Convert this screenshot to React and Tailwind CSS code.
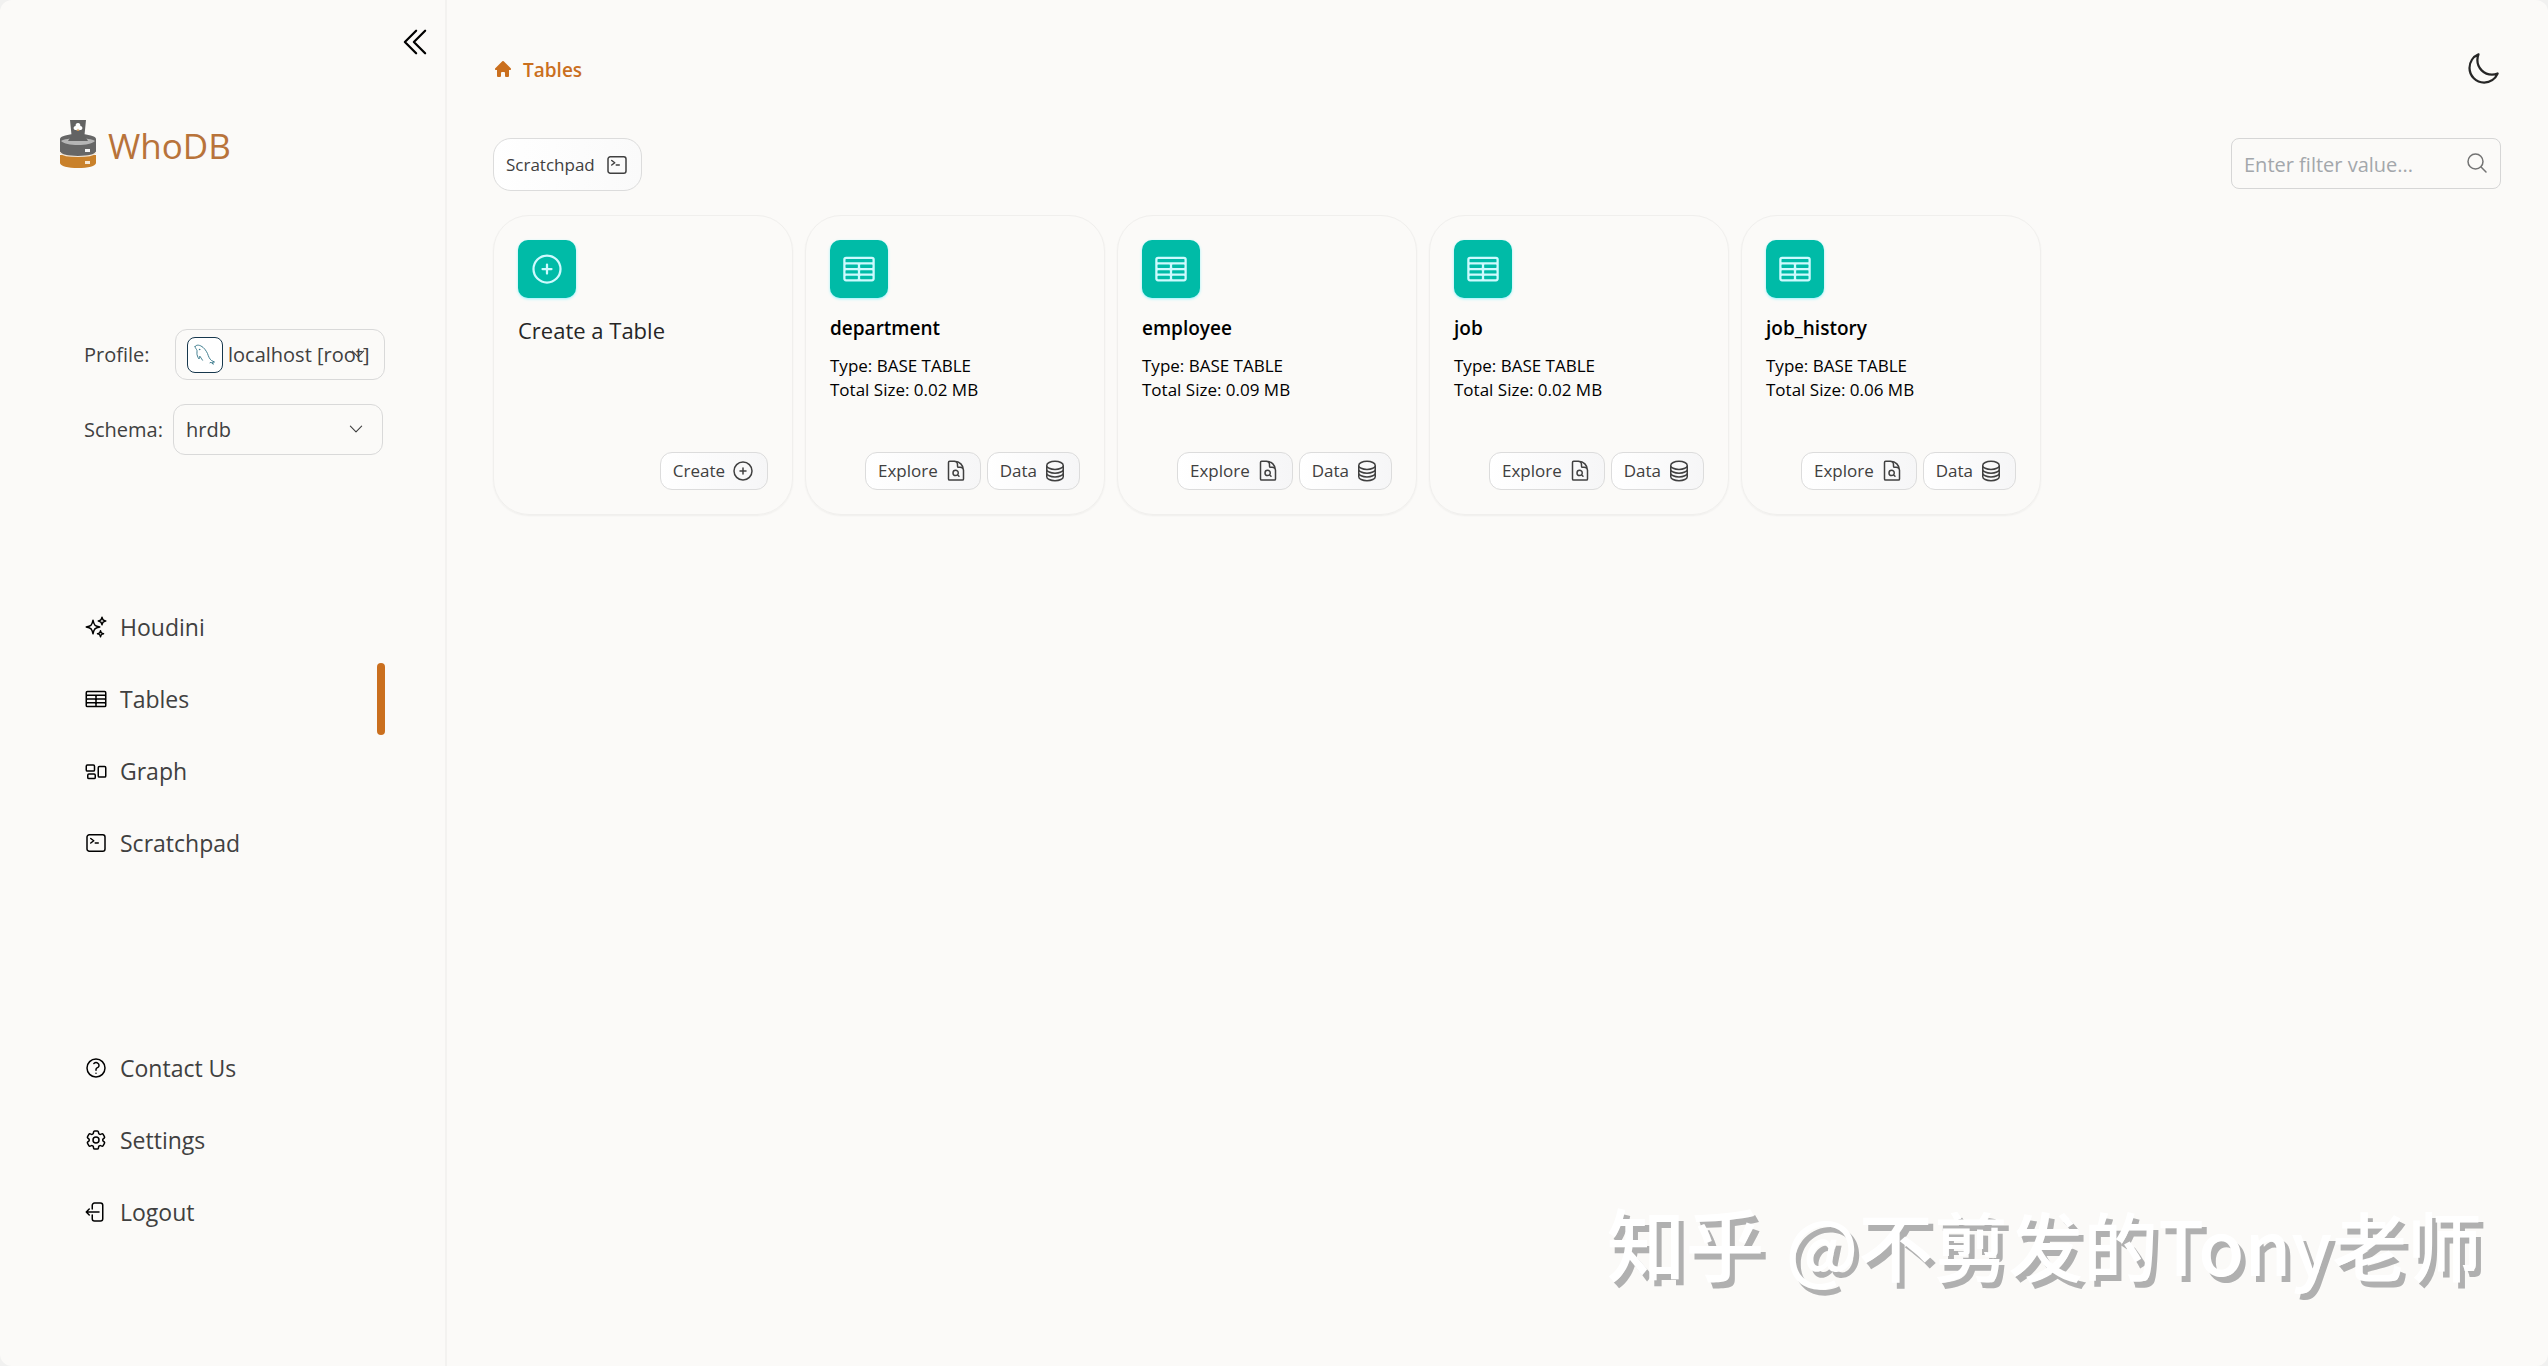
import {
  HiMiniHome,
  HiOutlineChevronDoubleLeft,
  HiOutlineChevronDown,
  HiOutlineCircleStack,
  HiOutlineCog6Tooth,
  HiOutlineCommandLine,
  HiOutlineDocumentMagnifyingGlass,
  HiOutlineMagnifyingGlass,
  HiOutlineMoon,
  HiOutlinePlusCircle,
  HiOutlineQuestionMarkCircle,
  HiOutlineRectangleGroup,
  HiOutlineSparkles,
  HiOutlineTableCells,
} from 'react-icons/hi2';

function LogoutIcon({ className }) {
  return (
    <svg viewBox="0 0 24 24" fill="none" stroke="currentColor" strokeWidth="1.5" strokeLinecap="round" strokeLinejoin="round" className={className}>
      <path d="M8.25 9V5.25A2.25 2.25 0 0 1 10.5 3h6a2.25 2.25 0 0 1 2.25 2.25v13.5A2.25 2.25 0 0 1 16.5 21h-6a2.25 2.25 0 0 1-2.25-2.25V15m-3 0-3-3m0 0 3-3m-3 3H15" />
    </svg>
  );
}

function Logo() {
  return (
    <svg viewBox="0 0 36 48" className="h-12 w-9">
      <path d="M0 35v8c0 3 8 5 18 5s18-2 18-5v-8z" fill="#c9812b" />
      <path d="M0 19v13c0 3 8 4.500 18 4.500s18-1.500 18-4.500V19z" fill="#666" />
      <path d="M0 32c1 3 8 4.500 18 4.500s17-1.500 18-4.500" fill="none" stroke="#f3e6d6" strokeWidth="1.200" />
      <ellipse cx="18" cy="19" rx="18" ry="5" fill="#666" />
      <path d="M1 21c3-2 9-2.800 17-2.800s14 .8 17 2.800c-3 2.800-9 4-17 4s-14-1.200-17-4z" fill="#b5b5b5" />
      <path d="M10 0h16l-1.500 15 3.500 6H8l3.500-6z" fill="#636363" />
      <path d="M18 3c1.800 0 2.800 1.500 2.300 3 1.700.2 2.400 1.400 2 2.700-.5 1.500-2.600 1.800-3.500.8l.6 1.500h-2.800l.6-1.500c-.9 1-3 .7-3.500-.8-.4-1.300.3-2.500 2-2.700-.5-1.500.5-3 2.300-3z" fill="#fff" />
      <path d="M18 8.500l1 2.500h-2z" fill="#c9812b" />
      <rect x="25" y="29" width="5" height="3" fill="#f6f6f6" />
      <rect x="25" y="41" width="5" height="3" fill="#f6e8d5" />
    </svg>
  );
}

function DolphinIcon() {
  return (
    <svg viewBox="0 0 24 24" fill="none" stroke="#2f7285" strokeWidth=".9" strokeLinecap="round" strokeLinejoin="round" className="h-6 w-6">
      <path d="M2 3.500C3.500 1.500 6 2 8 3c3 1.500 5 4.500 6.500 7.500 1 3 2 5.500 4 7l3 1.500-2 .3.800 2-2.300-2-1 .5" />
      <path d="M2 3.500c0 1.500 1.500 2.500 2 4 .2 2-.5 3.500.5 5.500.5 1.500 1 2.500 1.500 3 .5-.8.600-2 .8-2.800 1 1.300 1.800 2.500 2.700 4" />
      <circle cx="6.500" cy="6.500" r=".3" />
    </svg>
  );
}

const mainRoutes = [
  { name: 'Houdini', icon: HiOutlineSparkles },
  { name: 'Tables', icon: HiOutlineTableCells, active: true },
  { name: 'Graph', icon: HiOutlineRectangleGroup },
  { name: 'Scratchpad', icon: HiOutlineCommandLine },
];

const footerRoutes = [
  { name: 'Contact Us', icon: HiOutlineQuestionMarkCircle },
  { name: 'Settings', icon: HiOutlineCog6Tooth },
  { name: 'Logout', icon: LogoutIcon },
];

const tables = [
  { name: 'department', size: '0.02 MB' },
  { name: 'employee', size: '0.09 MB' },
  { name: 'job', size: '0.02 MB' },
  { name: 'job_history', size: '0.06 MB' },
];

function NavLink({ name, icon: Icon, active }) {
  return (
    <a
      href="#"
      aria-current={active ? 'page' : undefined}
      className="flex h-[72px] items-center justify-between text-[23px] text-neutral-700"
    >
      <span className="flex items-center gap-3">
        <Icon className="h-6 w-6 text-black" />
        {name}
      </span>
      {active && <span className="h-full w-2 rounded-full bg-[#ca6f1e]" />}
    </a>
  );
}

function Sidebar() {
  return (
    <aside className="flex w-[447px] shrink-0 flex-col border-r-2 border-[#f3f2f0]">
      <div className="flex justify-end px-3 pt-6">
        <button type="button" aria-label="Collapse sidebar" className="text-black">
          <HiOutlineChevronDoubleLeft className="h-9 w-9" />
        </button>
      </div>
      <div className="mt-15 flex h-12 items-center gap-3 pl-15 text-[35px] text-[#b8733a]">
        <Logo />
        <span className="pt-1">WhoDB</span>
      </div>

      <div className="mt-[161px] flex flex-col gap-6 pr-15 pl-21 text-xl text-neutral-700">
        <div className="flex items-center justify-between">
          <label htmlFor="profile">Profile:</label>
          <div className="relative w-[210px]">
            <span className="absolute top-2 left-3 flex h-9 w-9 items-center justify-center rounded-lg border border-[#17384d] bg-white">
              <DolphinIcon />
            </span>
            <select id="profile" className="h-[51px] w-full appearance-none rounded-xl border border-[#d9d9d9] pl-13">
              <option>localhost [root]</option>
            </select>
            <HiOutlineChevronDown className="pointer-events-none absolute top-4 right-[18px] h-[18px] w-[18px]" />
          </div>
        </div>
        <div className="flex items-center justify-between">
          <label htmlFor="schema">Schema:</label>
          <div className="relative mr-[2px] w-[210px]">
            <select id="schema" className="h-[51px] w-full appearance-none rounded-xl border border-[#d9d9d9] px-3">
              <option>hrdb</option>
            </select>
            <HiOutlineChevronDown className="pointer-events-none absolute top-4 right-[18px] h-[18px] w-[18px]" />
          </div>
        </div>
      </div>

      <nav className="mt-[136px] pr-15 pl-21">
        {mainRoutes.map((route) => (
          <NavLink key={route.name} {...route} />
        ))}
      </nav>
      <nav className="mt-auto mb-[118px] pr-15 pl-21">
        {footerRoutes.map((route) => (
          <NavLink key={route.name} {...route} />
        ))}
      </nav>
    </aside>
  );
}

function CardButton({ label, icon: Icon }) {
  return (
    <button
      type="button"
      className="flex h-[38px] items-center gap-[6px] rounded-xl border border-[#dcdcdc] bg-linear-to-r from-white to-[#f6f6f7] px-3 text-[17px] text-neutral-700"
    >
      {label}
      <Icon className="h-6 w-6" />
    </button>
  );
}

function Card({ icon: Icon, children, actions }) {
  return (
    <article className="flex h-[300px] w-[300px] flex-col rounded-[36px] border border-[#f0efed] p-6 shadow-xs">
      <div className="flex h-[58px] w-[58px] shrink-0 items-center justify-center rounded-[10px] bg-teal-500 text-cyan-100 shadow-sm shadow-cyan-200">
        <Icon className="h-9 w-9" />
      </div>
      {children}
      <div className="mt-auto flex justify-end gap-[6px]">{actions}</div>
    </article>
  );
}

function TableCard({ name, size }) {
  return (
    <Card
      icon={HiOutlineTableCells}
      actions={
        <>
          <CardButton label="Explore" icon={HiOutlineDocumentMagnifyingGlass} />
          <CardButton label="Data" icon={HiOutlineCircleStack} />
        </>
      }
    >
      <h2 className="mt-4 text-[19px] leading-7 font-semibold text-black">{name}</h2>
      <ul className="mt-3 text-[17px] leading-6 text-black">
        <li>Type: BASE TABLE</li>
        <li>Total Size: {size}</li>
      </ul>
    </Card>
  );
}

export default function App() {
  return (
    <div className="bg-[#f1f1f0]">
      <div className="relative flex min-h-screen rounded-xl bg-[#fbfaf8] font-['Open_Sans','Noto_Sans_CJK_SC',sans-serif]">
        <Sidebar />
        <main className="flex-1 pt-[51px] pr-[47px] pl-[46px]">
          <header className="flex h-9 items-center justify-between">
            <a href="#" className="flex items-center gap-[10px] text-[19px] font-semibold text-[#ca6f1e]">
              <HiMiniHome className="h-5 w-5" />
              <span className="pt-[2px]">Tables</span>
            </a>
            <button type="button" aria-label="Toggle dark mode" className="text-neutral-800">
              <HiOutlineMoon className="h-9 w-9" />
            </button>
          </header>

          <div className="mt-[51px] flex items-start justify-between">
            <button
              type="button"
              className="flex h-[53px] items-center gap-[10px] rounded-[18px] border border-[#dcdcdc] bg-linear-to-r from-white to-[#fafafa] px-3 text-[17px] text-neutral-700"
            >
              Scratchpad
              <HiOutlineCommandLine className="h-6 w-6" />
            </button>
            <div className="relative w-[270px]">
              <input
                type="text"
                aria-label="Filter tables"
                placeholder="Enter filter value..."
                className="h-[51px] w-full rounded-lg border border-[#d6d6d6] pt-[2px] pr-10 pl-3 text-xl placeholder:text-[#a3a7ab]"
              />
              <HiOutlineMagnifyingGlass className="absolute top-[13px] right-3 h-6 w-6 text-neutral-500" />
            </div>
          </div>

          <section className="mt-6 flex flex-wrap gap-3">
            <Card icon={HiOutlinePlusCircle} actions={<CardButton label="Create" icon={HiOutlinePlusCircle} />}>
              <h2 className="mt-4 text-[22px] leading-8 text-neutral-800">Create a Table</h2>
            </Card>
            {tables.map((table) => (
              <TableCard key={table.name} {...table} />
            ))}
          </section>
        </main>

        <p className="absolute right-[66px] bottom-[67px] font-['Noto_Sans_CJK_SC',sans-serif] text-[75px] leading-[110px] font-medium text-white [text-shadow:5px_6px_0_#b0b0b0]">
          <span className="mr-1 text-[79px]">知乎</span> @不剪发的Tony老师
        </p>
      </div>
    </div>
  );
}
